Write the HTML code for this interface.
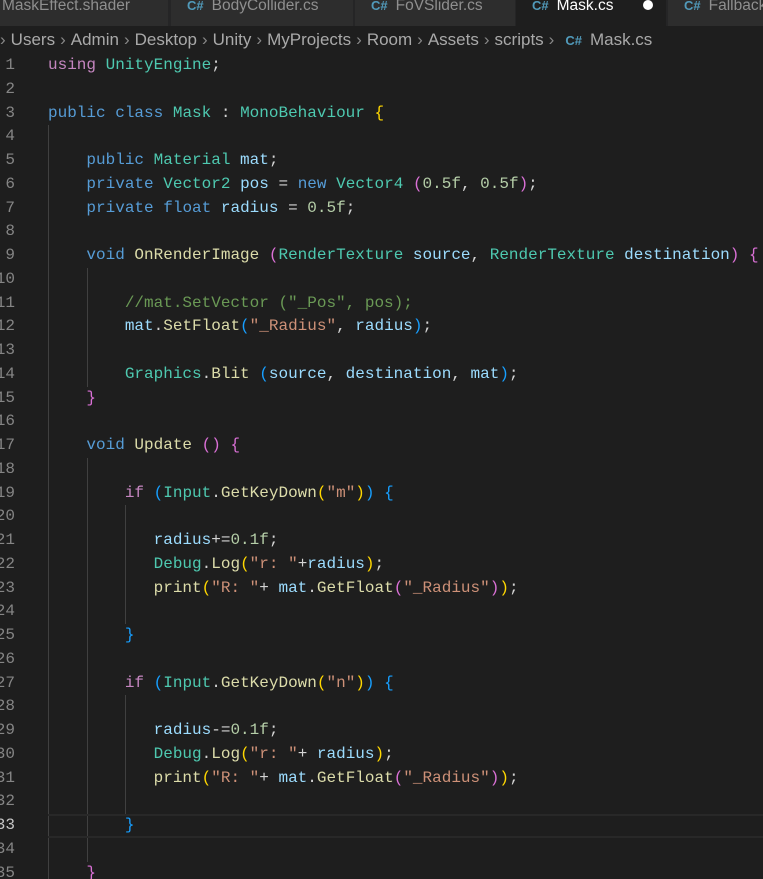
<!DOCTYPE html>
<html><head><meta charset="utf-8"><style>
*{margin:0;padding:0;box-sizing:border-box}
html,body{width:763px;height:879px;overflow:hidden}
body{background:#1e1e1e;position:relative;font-family:"Liberation Sans",sans-serif}
#tabs{position:absolute;left:0;top:0;width:763px;height:26px;background:#252526}
.tab{position:absolute;top:0;height:26px;background:#2d2d2d;color:#8f8f8f;font-size:15.5px;line-height:12px;white-space:nowrap;overflow:hidden}
.tab.a{background:#1e1e1e;color:#fff}
.cs{color:#519aba;font-weight:bold;font-size:13px;margin-right:8px}
#bc{position:absolute;left:0;top:28px;height:24px;color:#a9a9a9;font-size:17px;line-height:24px;white-space:nowrap}
#bc .s{color:#888;margin:0 5px}
#code{position:absolute;left:0;top:54px;width:763px;font-family:"Liberation Mono",monospace;font-size:16px}
.l{position:relative;height:23.75px;line-height:23.75px;white-space:pre}
.n{position:absolute;right:748px;color:#858585;text-align:right}
.n.cur{color:#c6c6c6}
.t{position:absolute;left:48px;color:#d4d4d4}
.g{position:absolute;width:1px;background:#404040}
.k{color:#569cd6}.c{color:#c586c0}.ty{color:#4ec9b0}.v{color:#9cdcfe}.f{color:#dcdcaa}.s{color:#ce9178}.nu{color:#b5cea8}.cm{color:#6a9955}
.b1{color:#ffd700}.b2{color:#da70d6}.b3{color:#179fff}
.hl{position:absolute;left:48px;right:0;border-top:2px solid #282828;border-bottom:2px solid #282828}
</style></head><body>
<div id="tabs">
<div class="tab" style="left:-2px;width:170px;padding-left:4px">MaskEffect.shader</div>
<div class="tab" style="left:171px;width:182px;padding-left:16px"><span class="cs">C#</span>BodyCollider.cs</div>
<div class="tab" style="left:355px;width:160px;padding-left:16px"><span class="cs">C#</span>FoVSlider.cs</div>
<div class="tab a" style="left:516px;width:150px;padding-left:16px"><span class="cs">C#</span>Mask.cs<span style="position:absolute;left:127px;top:0px;width:10px;height:10px;border-radius:5px;background:#fff"></span></div>
<div class="tab" style="left:668px;width:100px;padding-left:16px"><span class="cs">C#</span>Fallback</div>
</div>
<div id="bc"><span class="s" style="margin-left:0">›</span>Users<span class="s">›</span>Admin<span class="s">›</span>Desktop<span class="s">›</span>Unity<span class="s">›</span>MyProjects<span class="s">›</span>Room<span class="s">›</span>Assets<span class="s">›</span>scripts<span class="s">›</span><span class="cs" style="margin-left:6px">C#</span>Mask.cs</div>
<div id="code">
<div class="g" style="left:48px;top:71px;height:760px"></div>
<div class="g" style="left:87px;top:214px;height:119px"></div>
<div class="g" style="left:87px;top:404px;height:404px"></div>
<div class="g" style="left:125px;top:451px;height:119px"></div>
<div class="g" style="left:125px;top:641px;height:119px"></div>
<div class="hl" style="top:760px;height:24px"></div>
<div class="l"><span class="n">1</span><span class="t"><span class="c">using</span> <span class="ty">UnityEngine</span>;</span></div>
<div class="l"><span class="n">2</span></div>
<div class="l"><span class="n">3</span><span class="t"><span class="k">public</span> <span class="k">class</span> <span class="ty">Mask</span> : <span class="ty">MonoBehaviour</span> <span class="b1">{</span></span></div>
<div class="l"><span class="n">4</span></div>
<div class="l"><span class="n">5</span><span class="t">    <span class="k">public</span> <span class="ty">Material</span> <span class="v">mat</span>;</span></div>
<div class="l"><span class="n">6</span><span class="t">    <span class="k">private</span> <span class="ty">Vector2</span> <span class="v">pos</span> = <span class="k">new</span> <span class="ty">Vector4</span> <span class="b2">(</span><span class="nu">0.5f</span>, <span class="nu">0.5f</span><span class="b2">)</span>;</span></div>
<div class="l"><span class="n">7</span><span class="t">    <span class="k">private</span> <span class="k">float</span> <span class="v">radius</span> = <span class="nu">0.5f</span>;</span></div>
<div class="l"><span class="n">8</span></div>
<div class="l"><span class="n">9</span><span class="t">    <span class="k">void</span> <span class="f">OnRenderImage</span> <span class="b2">(</span><span class="ty">RenderTexture</span> <span class="v">source</span>, <span class="ty">RenderTexture</span> <span class="v">destination</span><span class="b2">)</span> <span class="b2">{</span></span></div>
<div class="l"><span class="n">10</span></div>
<div class="l"><span class="n">11</span><span class="t">        <span class="cm">//mat.SetVector ("_Pos", pos);</span></span></div>
<div class="l"><span class="n">12</span><span class="t">        <span class="v">mat</span>.<span class="f">SetFloat</span><span class="b3">(</span><span class="s">"_Radius"</span>, <span class="v">radius</span><span class="b3">)</span>;</span></div>
<div class="l"><span class="n">13</span></div>
<div class="l"><span class="n">14</span><span class="t">        <span class="ty">Graphics</span>.<span class="f">Blit</span> <span class="b3">(</span><span class="v">source</span>, <span class="v">destination</span>, <span class="v">mat</span><span class="b3">)</span>;</span></div>
<div class="l"><span class="n">15</span><span class="t">    <span class="b2">}</span></span></div>
<div class="l"><span class="n">16</span></div>
<div class="l"><span class="n">17</span><span class="t">    <span class="k">void</span> <span class="f">Update</span> <span class="b2">()</span> <span class="b2">{</span></span></div>
<div class="l"><span class="n">18</span></div>
<div class="l"><span class="n">19</span><span class="t">        <span class="c">if</span> <span class="b3">(</span><span class="ty">Input</span>.<span class="f">GetKeyDown</span><span class="b1">(</span><span class="s">"m"</span><span class="b1">)</span><span class="b3">)</span> <span class="b3">{</span></span></div>
<div class="l"><span class="n">20</span></div>
<div class="l"><span class="n">21</span><span class="t">           <span class="v">radius</span>+=<span class="nu">0.1f</span>;</span></div>
<div class="l"><span class="n">22</span><span class="t">           <span class="ty">Debug</span>.<span class="f">Log</span><span class="b1">(</span><span class="s">"r: "</span>+<span class="v">radius</span><span class="b1">)</span>;</span></div>
<div class="l"><span class="n">23</span><span class="t">           <span class="f">print</span><span class="b1">(</span><span class="s">"R: "</span>+ <span class="v">mat</span>.<span class="f">GetFloat</span><span class="b2">(</span><span class="s">"_Radius"</span><span class="b2">)</span><span class="b1">)</span>;</span></div>
<div class="l"><span class="n">24</span></div>
<div class="l"><span class="n">25</span><span class="t">        <span class="b3">}</span></span></div>
<div class="l"><span class="n">26</span></div>
<div class="l"><span class="n">27</span><span class="t">        <span class="c">if</span> <span class="b3">(</span><span class="ty">Input</span>.<span class="f">GetKeyDown</span><span class="b1">(</span><span class="s">"n"</span><span class="b1">)</span><span class="b3">)</span> <span class="b3">{</span></span></div>
<div class="l"><span class="n">28</span></div>
<div class="l"><span class="n">29</span><span class="t">           <span class="v">radius</span>-=<span class="nu">0.1f</span>;</span></div>
<div class="l"><span class="n">30</span><span class="t">           <span class="ty">Debug</span>.<span class="f">Log</span><span class="b1">(</span><span class="s">"r: "</span>+ <span class="v">radius</span><span class="b1">)</span>;</span></div>
<div class="l"><span class="n">31</span><span class="t">           <span class="f">print</span><span class="b1">(</span><span class="s">"R: "</span>+ <span class="v">mat</span>.<span class="f">GetFloat</span><span class="b2">(</span><span class="s">"_Radius"</span><span class="b2">)</span><span class="b1">)</span>;</span></div>
<div class="l"><span class="n">32</span></div>
<div class="l"><span class="n cur">33</span><span class="t">        <span class="b3">}</span></span></div>
<div class="l"><span class="n">34</span></div>
<div class="l"><span class="n">35</span><span class="t">    <span class="b2">}</span></span></div>
</div>
</body></html>
